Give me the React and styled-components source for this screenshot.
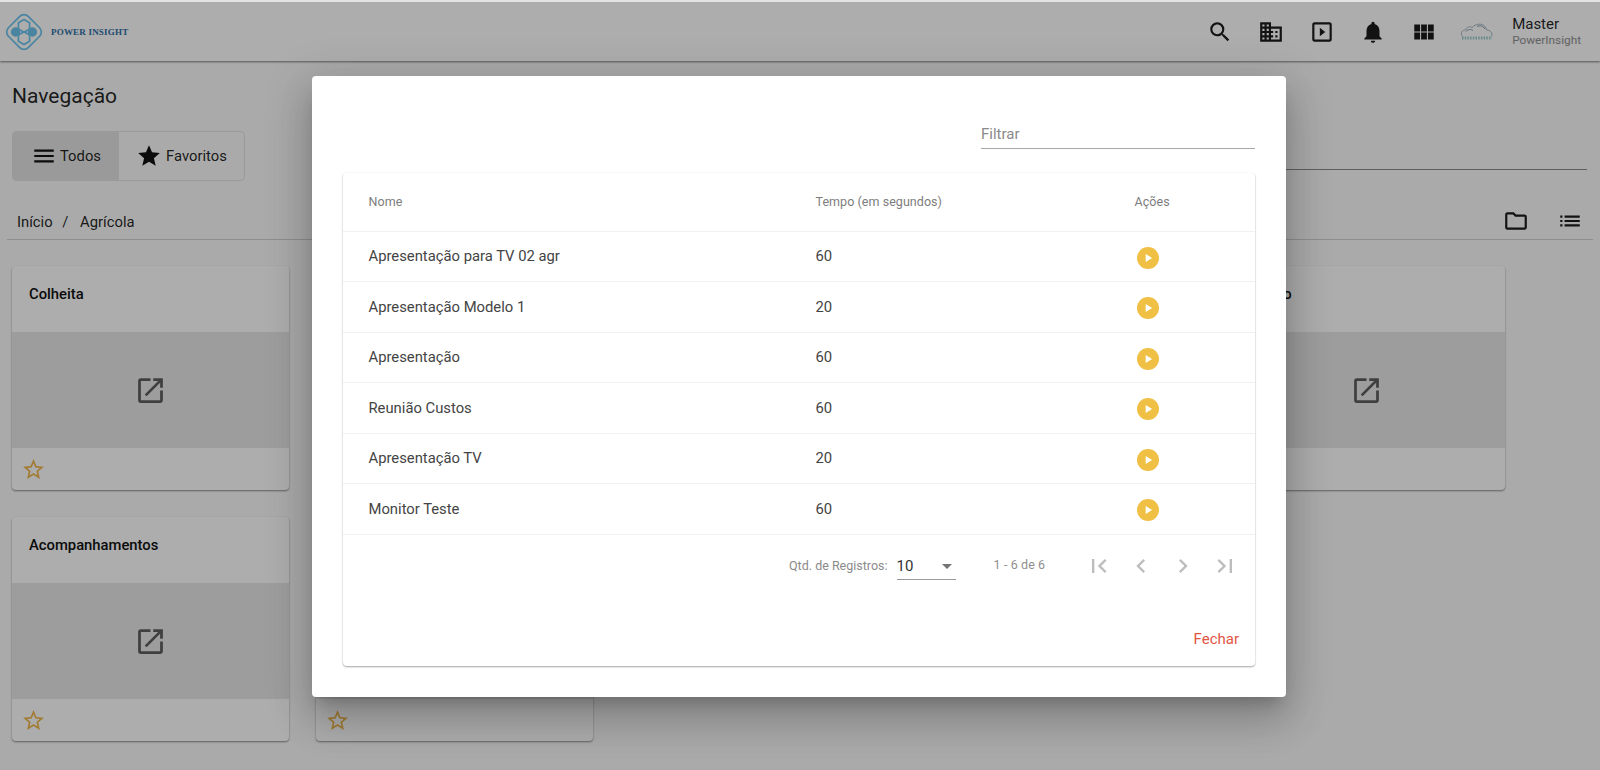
import React from 'react';
import styled, { createGlobalStyle } from 'styled-components';
import {
  MdSearch, MdOutlineDomain, MdOutlineSlideshow, MdNotifications, MdViewModule,
  MdMenu, MdStar, MdStarBorder, MdOutlineFolder, MdList, MdOpenInNew, MdPlayArrow,
  MdFirstPage, MdLastPage, MdChevronLeft, MdChevronRight, MdArrowDropDown,
} from 'react-icons/md';

const GlobalStyle = createGlobalStyle`
  html, body { margin: 0; padding: 0; background: #e4e4e4; overflow: hidden; }
  body { font-family: Roboto, "Liberation Sans", sans-serif; color: rgba(0, 0, 0, .87); }
  * { box-sizing: border-box; }
`;

const Screen = styled.div`
  position: relative;
  height: 768px;
  margin-top: 2px;
  background: #fbfbfb;
  overflow: hidden;
`;

const Header = styled.header`
  display: flex;
  align-items: center;
  justify-content: space-between;
  height: 59px;
  padding: 0 0 0 3px;
  background: #ffffff;
  box-shadow: 0 1px 2px rgba(0, 0, 0, .5);
  position: relative;
`;

const Brand = styled.div`
  display: flex;
  align-items: center;
  gap: 6px;
`;

const BrandName = styled.span`
  font-family: "Liberation Serif", serif;
  font-size: 9px;
  font-weight: 700;
  letter-spacing: .2px;
  color: #2f6fa5;
`;

const HeaderRight = styled.div`
  display: flex;
  align-items: center;
  padding-right: 19px;
`;

const HeaderIcon = styled.div`
  display: flex;
  align-items: center;
  justify-content: center;
  width: 51px;
  height: 40px;
  font-size: ${p => p.$size || 26}px;
  color: #1b1b1b;
`;

const UserBlock = styled.div`
  display: flex;
  align-items: center;
  gap: 18px;
  margin-left: 11px;
`;

const UserText = styled.div`
  display: flex;
  flex-direction: column;
  line-height: 16px;
`;

const UserName = styled.span`
  font-size: 15px;
`;

const UserOrg = styled.span`
  font-size: 11.8px;
  color: #909090;
`;

const Main = styled.main`
  padding: 0 7px;
`;

const PageTitle = styled.h1`
  margin: 23px 0 0 5px;
  font-size: 21px;
  line-height: 24px;
  font-weight: 400;
`;

const TabsRow = styled.div`
  display: flex;
  align-items: flex-start;
  justify-content: space-between;
  margin: 23px 6px 0 5px;
`;

const Tabs = styled.div`
  display: flex;
  height: 50px;
  width: 233px;
  border: 1px solid #e2e2e2;
  border-radius: 4px;
  overflow: hidden;
`;

const Tab = styled.div`
  display: flex;
  align-items: center;
  justify-content: center;
  gap: ${p => p.$gap}px;
  flex: ${p => p.$grow};
  font-size: 14.8px;
  background: ${p => (p.$active ? '#e4e4e4' : 'transparent')};
  svg { font-size: ${p => p.$iconSize}px; color: #111; }
`;

const FilterLine = styled.div`
  width: 400px;
  height: 39px;
  border-bottom: 1px solid #8d8d8d;
`;

const CrumbRow = styled.div`
  display: flex;
  align-items: center;
  justify-content: space-between;
  height: 38px;
  margin-top: 21px;
  padding: 0 10px;
  border-bottom: 1px solid #d2d2d2;
`;

const Crumbs = styled.div`
  padding-top: 3px;
  font-size: 14.8px;
  span { margin: 0 8px 0 6px; }
`;

const ViewIcons = styled.div`
  display: flex;
  align-items: center;
  gap: 28px;
  font-size: 26px;
  color: #1b1b1b;
  svg { display: block; }
`;

const CardGrid = styled.div`
  display: grid;
  grid-template-columns: repeat(5, 277px);
  column-gap: 27px;
  row-gap: 27px;
  margin: 26px 0 0 5px;
`;

const Card = styled.article`
  display: flex;
  flex-direction: column;
  height: 224px;
  background: #fff;
  border-radius: 4px;
  overflow: hidden;
  box-shadow: 0 1px 2px rgba(0, 0, 0, .45);
`;

const CardTitle = styled.div`
  height: 66px;
  padding: 18px 17px 0;
  font-size: 14.8px;
  line-height: 20px;
  font-weight: 500;
  color: #111;
`;

const CardPreview = styled.div`
  display: flex;
  align-items: center;
  justify-content: center;
  height: 116px;
  background: #e8e8e8;
  font-size: 33px;
  color: #5e5e5e;
`;

const CardFooter = styled.div`
  display: flex;
  align-items: center;
  flex: 1;
  padding: 1px 0 0 9px;
  font-size: 25px;
  color: #eeb64a;
`;

const Backdrop = styled.div`
  position: absolute;
  inset: 0;
  display: flex;
  align-items: center;
  justify-content: center;
  background: rgba(0, 0, 0, .32);
`;

const Modal = styled.div`
  display: flex;
  flex-direction: column;
  width: 974px;
  height: 621px;
  margin-left: -2px;
  padding: 0 31px;
  background: #fff;
  border-radius: 4px;
  box-shadow: 0 11px 15px -7px rgba(0, 0, 0, .2), 0 24px 38px 3px rgba(0, 0, 0, .14), 0 9px 46px 8px rgba(0, 0, 0, .12);
`;

const FilterBar = styled.div`
  display: flex;
  justify-content: flex-end;
  height: 97px;
  padding-top: 46px;
`;

const FilterInput = styled.div`
  width: 274px;
  height: 27px;
  padding-top: 2px;
  border-bottom: 1px solid #a8a8a8;
  font-size: 15px;
  line-height: 20px;
  color: #8a8a8a;
`;

const TableCard = styled.section`
  display: flex;
  flex-direction: column;
  height: 493px;
  border-radius: 4px;
  box-shadow: 0 1px 2px rgba(0, 0, 0, .35), 0 0 2px rgba(0, 0, 0, .04);
`;

const TableRow = styled.div`
  display: grid;
  grid-template-columns: 447px 319px 1fr;
  align-items: center;
  height: ${p => p.$height}px;
  padding-left: 25.5px;
  border-bottom: 1px solid #f1f1f1;
`;

const HeadCell = styled.div`
  font-size: 12.5px;
  color: #7d7d7d;
  letter-spacing: .05px;
`;

const Cell = styled.div`
  font-size: 14.8px;
  color: #444;
`;

const PlayButton = styled.div`
  display: flex;
  align-items: center;
  justify-content: center;
  width: 22px;
  height: 22px;
  margin: 3px 0 0 2px;
  border-radius: 50%;
  background: #f0c044;
  font-size: 14px;
  color: #fff;
`;

const Pagination = styled.div`
  display: flex;
  align-items: center;
  height: 62px;
  padding-left: 446px;
`;

const PageLabel = styled.span`
  font-size: 12.5px;
  color: #8a8a8a;
`;

const PageSelect = styled.div`
  display: flex;
  align-items: center;
  justify-content: space-between;
  width: 59px;
  height: 28px;
  margin-left: 9px;
  padding-top: 1px;
  border-bottom: 1px solid #9a9a9a;
  font-size: 15px;
  color: #333;
  svg { font-size: 24px; color: #757575; margin-right: -3px; }
`;

const PageRange = styled.span`
  margin: -2px 0 0 38px;
  font-size: 12.5px;
  color: #8f8f8f;
  letter-spacing: .1px;
`;

const PageButtons = styled.div`
  display: flex;
  margin-left: 33px;
`;

const PageButton = styled.div`
  display: flex;
  align-items: center;
  justify-content: center;
  width: 42px;
  font-size: 28px;
  color: #bdbdbd;
`;

const Actions = styled.div`
  display: flex;
  justify-content: flex-end;
  padding: 32px 16px 0 0;
`;

const CloseButton = styled.span`
  font-size: 15px;
  line-height: 20px;
  color: #e25545;
`;

function BrandLogo() {
  return (
    <svg width="42" height="42" viewBox="0 0 42 42" fill="none" stroke="#6cc4ee" strokeWidth="1.7">
      <rect x="7" y="7" width="28" height="28" rx="6" transform="rotate(45 21 21)" />
      <path d="M21 8.500l5.600 3.200v6.400L21 21.300l-5.600-3.200v-6.400z" />
      <path d="M21 20.700l5.600 3.200v6.400L21 33.500l-5.600-3.200v-6.400z" />
      <circle cx="12.500" cy="21" r="3.800" fill="#6cc4ee" />
      <circle cx="29.500" cy="21" r="3.800" fill="#6cc4ee" />
    </svg>
  );
}

function CloudLogo() {
  return (
    <svg width="34" height="20" viewBox="0 0 34 20" fill="none" stroke="#a4bcc6" strokeWidth="1">
      <path d="M2.500 14.500C0 11 2 8 5.500 8 6.500 5 10 4 12.500 5.500 15 1.500 22 1 25 4.500 26 5.500 26.500 7 26.500 8 30.500 8 33 11 31.500 14.500" />
      <path d="M6 9.500C8 7 11 7 13 8.500M17 4.500C20 3 23.500 4 25 7" stroke="#8397a3" />
      <path d="M2 16h30" stroke="#98cccc" strokeWidth="3" strokeDasharray="1.500 1.200" />
    </svg>
  );
}

const cards = ['Colheita', '', '', '', 'Plantio', 'Acompanhamentos', ''];

const rows = [
  { name: 'Apresentação para TV 02 agr', time: 60 },
  { name: 'Apresentação Modelo 1', time: 20 },
  { name: 'Apresentação', time: 60 },
  { name: 'Reunião Custos', time: 60 },
  { name: 'Apresentação TV', time: 20 },
  { name: 'Monitor Teste', time: 60 },
];

export default function App() {
  return (
    <Screen>
      <GlobalStyle />
      <Header>
        <Brand>
          <BrandLogo />
          <BrandName>POWER INSIGHT</BrandName>
        </Brand>
        <HeaderRight>
          <HeaderIcon><MdSearch /></HeaderIcon>
          <HeaderIcon><MdOutlineDomain /></HeaderIcon>
          <HeaderIcon><MdOutlineSlideshow /></HeaderIcon>
          <HeaderIcon><MdNotifications /></HeaderIcon>
          <HeaderIcon><MdViewModule /></HeaderIcon>
          <UserBlock>
            <CloudLogo />
            <UserText>
              <UserName>Master</UserName>
              <UserOrg>PowerInsight</UserOrg>
            </UserText>
          </UserBlock>
        </HeaderRight>
      </Header>

      <Main>
        <PageTitle>Navegação</PageTitle>
        <TabsRow>
          <Tabs>
            <Tab $active $grow="0 0 106px" $gap={3} $iconSize={26}><MdMenu />Todos</Tab>
            <Tab $grow="1" $gap={4} $iconSize={26}><MdStar />Favoritos</Tab>
          </Tabs>
          <FilterLine />
        </TabsRow>
        <CrumbRow>
          <Crumbs>Início <span>/</span> Agrícola</Crumbs>
          <ViewIcons>
            <MdOutlineFolder />
            <MdList />
          </ViewIcons>
        </CrumbRow>
        <CardGrid>
          {cards.map((title, i) => (
            <Card key={i}>
              <CardTitle>{title}</CardTitle>
              <CardPreview><MdOpenInNew /></CardPreview>
              <CardFooter><MdStarBorder /></CardFooter>
            </Card>
          ))}
        </CardGrid>
      </Main>

      <Backdrop>
        <Modal>
          <FilterBar>
            <FilterInput>Filtrar</FilterInput>
          </FilterBar>
          <TableCard>
            <TableRow $height={59}>
              <HeadCell>Nome</HeadCell>
              <HeadCell>Tempo (em segundos)</HeadCell>
              <HeadCell>Ações</HeadCell>
            </TableRow>
            {rows.map(row => (
              <TableRow key={row.name} $height={50.5}>
                <Cell>{row.name}</Cell>
                <Cell>{row.time}</Cell>
                <PlayButton><MdPlayArrow /></PlayButton>
              </TableRow>
            ))}
            <Pagination>
              <PageLabel>Qtd. de Registros:</PageLabel>
              <PageSelect>10<MdArrowDropDown /></PageSelect>
              <PageRange>1 - 6 de 6</PageRange>
              <PageButtons>
                <PageButton><MdFirstPage /></PageButton>
                <PageButton><MdChevronLeft /></PageButton>
                <PageButton><MdChevronRight /></PageButton>
                <PageButton><MdLastPage /></PageButton>
              </PageButtons>
            </Pagination>
            <Actions>
              <CloseButton>Fechar</CloseButton>
            </Actions>
          </TableCard>
        </Modal>
      </Backdrop>
    </Screen>
  );
}
